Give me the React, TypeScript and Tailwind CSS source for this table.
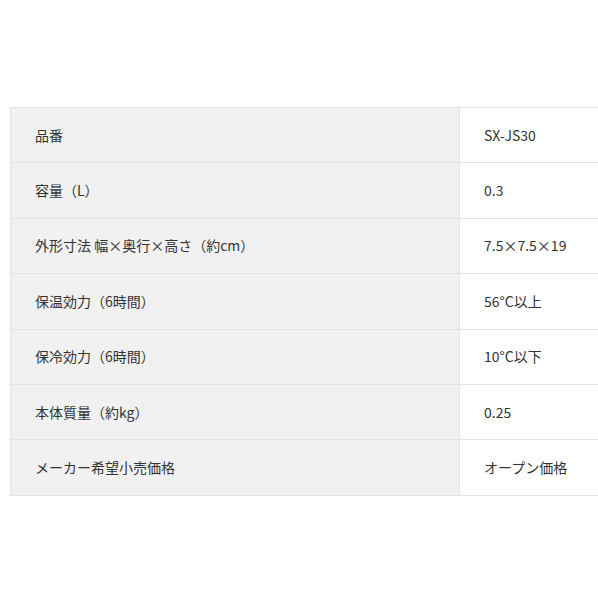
const rows: [string, string][] = [
  ["品番", "SX-JS30"],
  ["容量（L）", "0.3"],
  ["外形寸法 幅×奥行×高さ（約cm）", "7.5×7.5×19"],
  ["保温効力（6時間）", "56°C以上"],
  ["保冷効力（6時間）", "10°C以下"],
  ["本体質量（約kg）", "0.25"],
  ["メーカー希望小売価格", "オープン価格"],
];

export default function App() {
  return (
    <div
      className="w-[598px] h-[598px] overflow-hidden bg-white pt-[107px] pl-[10px]"
      style={{ fontFamily: '"Noto Sans CJK JP", "Noto Sans", sans-serif' }}
    >
      <table className="w-[640px] border-collapse text-[14px] text-[#333] table-fixed">
        <tbody>
          {rows.map(([k, v]) => (
            <tr key={k} className="h-[55.4px]">
              <th className="w-[449px] border border-[#e3e3e3] bg-[#f1f1f1] pl-[24px] text-left font-normal">
                {k}
              </th>
              <td className="border border-[#e3e3e3] bg-white pl-[24px] text-left">{v}</td>
            </tr>
          ))}
        </tbody>
      </table>
    </div>
  );
}
